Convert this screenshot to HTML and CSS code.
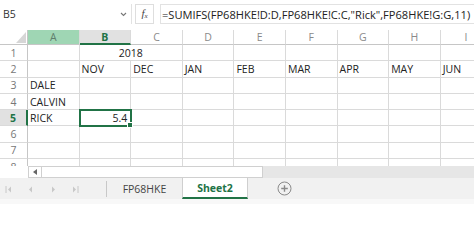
FILE: index.html
```html
<!DOCTYPE html>
<html>
<head>
<meta charset="utf-8">
<link rel="stylesheet" href="styles.css">
</head>
<body>
<div class="app">
  <div class="fbar">
    <div class="namebox"><span>B5</span><svg class="chev" width="7" height="5" viewBox="0 0 7 5"><path d="M1 1l2.5 2.5L6 1" fill="none" stroke="#777" stroke-width="1.1"/></svg></div>
    <div class="fxbox"><span class="fx">f<sub>x</sub></span></div>
    <div class="formula">=SUMIFS(FP68HKE!D:D,FP68HKE!C:C,"Rick",FP68HKE!G:G,11)</div>
  </div>
  <div class="grid">
    <div class="corner"><svg width="10" height="11" viewBox="0 0 10 11"><path d="M10 0V11H0Z" fill="#d6d6d6"/></svg></div>
    <div class="ch cha">A</div><div class="ch chb">B</div><div class="ch">C</div><div class="ch">D</div><div class="ch">E</div><div class="ch">F</div><div class="ch">G</div><div class="ch">H</div><div class="ch">I</div>

    <div class="rh">1</div><div class="c"></div><div class="c ctr span2">2018</div><div class="c"></div><div class="c"></div><div class="c"></div><div class="c"></div><div class="c"></div><div class="c"></div>

    <div class="rh">2</div><div class="c"></div><div class="c">NOV</div><div class="c">DEC</div><div class="c">JAN</div><div class="c">FEB</div><div class="c">MAR</div><div class="c">APR</div><div class="c">MAY</div><div class="c">JUN</div>

    <div class="rh">3</div><div class="c">DALE</div><div class="c"></div><div class="c"></div><div class="c"></div><div class="c"></div><div class="c"></div><div class="c"></div><div class="c"></div><div class="c"></div>

    <div class="rh">4</div><div class="c">CALVIN</div><div class="c"></div><div class="c"></div><div class="c"></div><div class="c"></div><div class="c"></div><div class="c"></div><div class="c"></div><div class="c"></div>

    <div class="rh rhsel">5</div><div class="c">RICK</div><div class="c num sel">5.4</div><div class="c"></div><div class="c"></div><div class="c"></div><div class="c"></div><div class="c"></div><div class="c"></div><div class="c"></div>

    <div class="rh">6</div><div class="c"></div><div class="c"></div><div class="c"></div><div class="c"></div><div class="c"></div><div class="c"></div><div class="c"></div><div class="c"></div><div class="c"></div>

    <div class="rh">7</div><div class="c"></div><div class="c"></div><div class="c"></div><div class="c"></div><div class="c"></div><div class="c"></div><div class="c"></div><div class="c"></div><div class="c"></div>

    <div class="rh rhpart">8</div><div class="c"></div><div class="c"></div><div class="c"></div><div class="c"></div><div class="c"></div><div class="c"></div><div class="c"></div><div class="c"></div><div class="c"></div>
  </div>
  <div class="hscroll">
    <div class="hs-pad"></div>
    <div class="hs-btn"><svg width="4" height="6" viewBox="0 0 4 6"><path d="M4 0V6L0 3Z" fill="#666"/></svg></div>
    <div class="hs-thumb"></div>
    <div class="hs-track"></div>
  </div>
  <div class="tabbar">
    <div class="navs">
      <svg width="8" height="7" viewBox="0 0 8 7"><path d="M1 0V7" stroke="#c8c8c8"/><path d="M6 0.5V6.5L3 3.5Z" fill="#c8c8c8"/></svg>
      <svg width="8" height="7" viewBox="0 0 8 7"><path d="M5 0.5V6.5L2 3.5Z" fill="#c8c8c8"/></svg>
      <svg width="8" height="7" viewBox="0 0 8 7"><path d="M3 0.5V6.5L6 3.5Z" fill="#c8c8c8"/></svg>
      <svg width="8" height="7" viewBox="0 0 8 7"><path d="M2 0.5V6.5L5 3.5Z" fill="#c8c8c8"/><path d="M7 0V7" stroke="#c8c8c8"/></svg>
    </div>
    <div class="tab">FP68HKE</div>
    <div class="tab active">Sheet2</div>
    <div class="addtab"><svg width="15" height="15" viewBox="0 0 15 15"><circle cx="7.5" cy="7.5" r="6.5" fill="none" stroke="#8a8a8a" stroke-width="1"/><path d="M7.5 4.2V10.8M4.2 7.5H10.8" stroke="#8a8a8a" stroke-width="1.4"/></svg></div>
  </div>
  <div class="status"></div>
</div>
</body>
</html>
```

FILE: styles.css
```css
html, body {
  margin: 0;
  padding: 0;
  background: #ffffff;
}
.app {
  width: 474px;
  height: 204px;
  overflow: hidden;
  font-family: "Open Sans", "Noto Sans", sans-serif;
  font-size: 10.5px;
  color: #222;
}
.fbar {
  height: 30px;
  display: flex;
  align-items: flex-start;
  padding-top: 4px;
  box-sizing: border-box;
  background: #ffffff;
}
.namebox {
  width: 132px;
  height: 20px;
  box-sizing: border-box;
  display: flex;
  align-items: center;
  justify-content: space-between;
  padding: 0 4px 0 3px;
  font-size: 10.5px;
  color: #333;
  border-right: 1px solid #e2e2e2;
}
.chev { margin-top: 1px; }
.fxbox {
  margin-left: 3px;
  width: 19px;
  height: 20px;
  box-sizing: border-box;
  border: 1px solid #dedede;
  display: flex;
  align-items: center;
  justify-content: center;
}
.fx {
  font-family: "Liberation Serif", serif;
  font-style: italic;
  font-size: 11px;
  color: #444;
  line-height: 1;
}
.fx sub { font-size: 7px; vertical-align: -1px; }
.formula {
  margin-left: 6px;
  flex: 1;
  height: 20px;
  box-sizing: border-box;
  border: 1px solid #e2e2e2;
  border-right: none;
  display: flex;
  align-items: center;
  padding-left: 1px;
  font-size: 11.1px;
  color: #222;
  white-space: nowrap;
  overflow: hidden;
}
.grid {
  display: grid;
  grid-template-columns: 28px repeat(9, 51.6px);
  grid-template-rows: 15px repeat(8, 16.3px);
  height: 136px;
  overflow: hidden;
  width: 474px;
}
.grid > div {
  box-sizing: border-box;
  border-right: 1px solid #dadada;
  border-bottom: 1px solid #dadada;
  display: flex;
  align-items: center;
  white-space: nowrap;
}
.corner {
  justify-content: flex-end;
  align-items: flex-end !important;
  padding: 0 1px 1px 0;
  border-right-color: #c6c6c6 !important;
  border-bottom-color: #c6c6c6 !important;
}
.ch {
  justify-content: center;
  color: #8a8a8a;
  font-size: 10.5px;
  border-bottom-color: #c6c6c6 !important;
}
.cha {
  background: #9fd6b4;
  color: #5f7f6c;
}
.chb {
  background: #e1e1e1;
  color: #217346;
  font-weight: 700;
  border-bottom: 2px solid #217346 !important;
}
.rh {
  justify-content: center;
  color: #777;
  font-size: 10.5px;
  border-right-color: #c6c6c6 !important;
}
.rhpart {
  align-items: flex-start !important;
  line-height: 16px;
}
.rhsel {
  background: #e1e1e1;
  color: #217346;
  font-weight: 700;
  border-right: 2px solid #217346 !important;
}
.c {
  padding-left: 2px;
  color: #222;
}
.span2 { grid-column: span 2; }
.ctr { justify-content: center; padding-left: 0; }
.num { justify-content: flex-end; padding-right: 3px; }
.sel {
  position: relative;
  outline: 2px solid #217346;
  outline-offset: -1px;
}
.sel::after {
  content: "";
  position: absolute;
  right: -3px;
  bottom: -3px;
  width: 4px;
  height: 4px;
  background: #217346;
  border: 1px solid #fff;
}
.hscroll {
  height: 12px;
  display: flex;
  background: #e6e6e6;
}
.hs-pad {
  width: 28px;
  background: #ffffff;
}
.hs-btn {
  width: 14px;
  background: #ffffff;
  box-sizing: border-box;
  border: 1px solid #d0d0d0;
  display: flex;
  align-items: center;
  justify-content: center;
}
.hs-thumb {
  width: 221px;
  background: #ffffff;
  box-sizing: border-box;
  border: 1px solid #d0d0d0;
  border-left: none;
}
.hs-track { flex: 1; }
.tabbar {
  height: 21px;
  display: flex;
  align-items: stretch;
  background: #f1f1f1;
}
.navs {
  width: 107px;
  display: flex;
  align-items: center;
  gap: 14px;
  padding-left: 5px;
  box-sizing: border-box;
  border-right: 1px solid #c8c8c8;
  margin: 3px 0 2px 0;
}
.tab {
  width: 75px;
  display: flex;
  align-items: center;
  justify-content: center;
  color: #444;
  font-size: 10.5px;
  box-sizing: border-box;
}
.tab.active {
  width: 66px;
  background: #ffffff;
  color: #217346;
  font-weight: 700;
  border-left: 1px solid #cfcfcf;
  border-right: 1px solid #cfcfcf;
  border-bottom: 2px solid #217346;
}
.addtab {
  margin-left: 29px;
  display: flex;
  align-items: center;
}
.status {
  height: 6px;
  background: #f8f8f8;
}
```
